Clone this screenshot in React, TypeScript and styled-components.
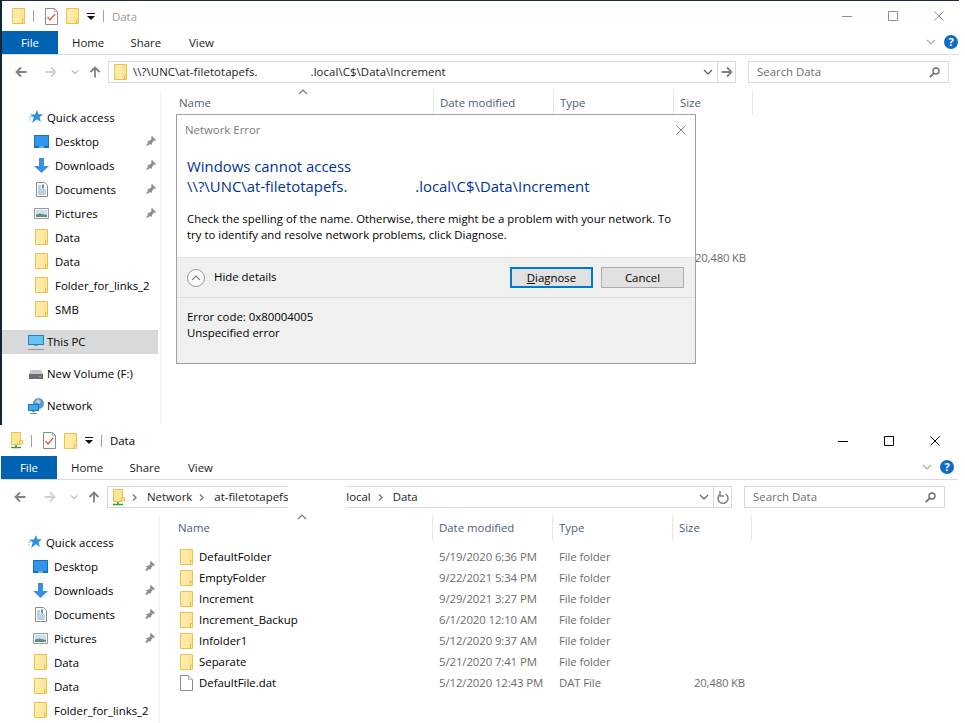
import React from 'react';
import styled, { createGlobalStyle } from 'styled-components';

const UI_FONT = `"Open Sans", "Noto Sans", "Liberation Sans", sans-serif`;

const GlobalStyle = createGlobalStyle`
  html, body {
    margin: 0;
    background: #fff;
    overflow: hidden;
  }
  body {
    font-family: ${UI_FONT};
    font-size: 11.4px;
    color: #000;
  }
`;

const Frame = styled.div`
  width: 959px;
  height: 723px;
  overflow: hidden;
`;

const Window = styled.section<{ $width: number; $height: number; $active?: boolean }>`
  position: relative;
  box-sizing: border-box;
  width: ${p => p.$width}px;
  height: ${p => p.$height}px;
  margin-left: ${p => (p.$active ? 1 : 0)}px;
  background: #fff;
  overflow: hidden;
  border-top: ${p => (p.$active ? 'none' : '1px solid #1d2d3e')};
  border-left: ${p => (p.$active ? 'none' : '2px solid #10243a')};
`;

const TitleBar = styled.header<{ $active?: boolean }>`
  display: flex;
  align-items: center;
  height: ${p => (p.$active ? 31 : 30)}px;
  padding-left: 10px;
  gap: 8px;
`;

const TitleSep = styled.i`
  width: 1px;
  height: 12px;
  margin-right: 3px;
  background: #a0a0a0;
`;

const TitleText = styled.span<{ $active?: boolean }>`
  margin-left: -3px;
  color: ${p => (p.$active ? '#000' : '#999')};
`;

const Controls = styled.div`
  display: flex;
  margin-left: auto;
  height: 100%;
`;

const ControlButton = styled.div`
  display: flex;
  align-items: center;
  justify-content: center;
  width: 46px;
  height: 100%;
`;

const TabRow = styled.nav`
  display: flex;
  align-items: center;
  height: 23px;
  border-bottom: 1px solid #dadada;
`;

const FileTab = styled.div`
  display: flex;
  align-items: center;
  justify-content: center;
  width: 56px;
  height: 100%;
  margin-right: 14px;
  background: #0063b1;
  color: #fff;
`;

const Tab = styled.div`
  width: 58.5px;
  color: #1a1a1a;
`;

const RibbonEnd = styled.div`
  display: flex;
  align-items: center;
  gap: 8px;
  margin: -2px 0 0 auto;
  padding-right: 4px;
`;

const HelpBadge = styled.div`
  display: flex;
  align-items: center;
  justify-content: center;
  width: 14px;
  height: 14px;
  border-radius: 50%;
  background: #0f6cc4;
  color: #fff;
  font-size: 11px;
  font-weight: 700;
`;

const AddressRow = styled.div`
  display: flex;
  align-items: center;
  height: 22px;
  margin: 6px 0 7px;
  padding-right: 13px;
`;

const NavGroup = styled.div`
  display: flex;
  align-items: center;
  flex: none;
  width: 106px;
  box-sizing: border-box;
  padding-left: 13px;
`;

const NavSlot = styled.span<{ $after: number }>`
  display: flex;
  margin-right: ${p => p.$after}px;
`;

const AddressBox = styled.div`
  display: flex;
  align-items: center;
  flex: 1;
  min-width: 0;
  height: 100%;
  box-sizing: border-box;
  border: 1px solid #d9d9d9;
  padding-left: 5px;
`;

const PathText = styled.span`
  margin: -2px 0 0 6px;
  color: #1a1a1a;
  letter-spacing: 0.08px;
  white-space: pre;
`;

const Gap = styled.span<{ $w: number }>`
  display: inline-block;
  width: ${p => p.$w}px;
`;

const Crumb = styled.span`
  margin-top: -2px;
  color: #1a1a1a;
  white-space: nowrap;
`;

const CrumbArrow = styled.span`
  display: flex;
  margin: 0 10px 0 7px;
`;

const RedactedGap = styled.span`
  flex: none;
  width: 58px;
  height: 24px;
  background: #fff;
`;

const AddressEnd = styled.div`
  display: flex;
  align-items: center;
  margin-left: auto;
  height: 100%;
`;

const GoButton = styled.div`
  display: flex;
  align-items: center;
  justify-content: center;
  width: 17px;
  height: 100%;
  margin-left: 4px;
  border-left: 1px solid #d9d9d9;
`;

const SearchBox = styled.div`
  display: flex;
  align-items: center;
  justify-content: space-between;
  flex: none;
  width: 201px;
  height: 100%;
  box-sizing: border-box;
  margin-left: 12px;
  padding: 0 8px;
  border: 1px solid #d9d9d9;
  color: #6d6d6d;
`;

const SearchHint = styled.span`
  margin-top: -2px;
`;

const Body = styled.div`
  display: flex;
`;

const NavPane = styled.aside`
  flex: none;
  width: 159px;
  height: 335px;
  box-sizing: border-box;
  padding-top: 15px;
  border-right: 1px solid #f0f0f0;
`;

const NavRow = styled.div<{ $level?: number; $selected?: boolean; $before?: number }>`
  display: flex;
  align-items: center;
  width: 156px;
  height: 24px;
  box-sizing: border-box;
  margin-top: ${p => p.$before ?? 0}px;
  padding-left: ${p => (p.$level ? 32 : 27)}px;
  background: ${p => (p.$selected ? '#d9d9d9' : 'transparent')};
`;

const NavIcon = styled.span<{ $level?: number }>`
  display: flex;
  align-items: center;
  justify-content: center;
  flex: none;
  width: ${p => (p.$level ? 15 : 13)}px;
  margin-right: ${p => (p.$level ? 6 : 5)}px;
`;

const NavLabel = styled.span<{ $raised?: boolean }>`
  flex: 1;
  margin-top: ${p => (p.$raised ? -2 : 0)}px;
  white-space: nowrap;
`;

const PinSlot = styled.span`
  display: flex;
  margin-right: 2px;
`;

const FileArea = styled.div`
  position: relative;
  flex: 1;
  padding-left: 11px;
`;

const SortMark = styled.span`
  position: absolute;
  left: 137px;
  top: -1px;
  display: flex;
`;

const ColumnHeader = styled.div`
  display: grid;
  grid-template-columns: 261px 120px 120px 80px;
  height: 25px;
  width: 582px;
`;

const HeadCell = styled.div<{ $last?: boolean }>`
  display: flex;
  align-items: center;
  box-sizing: border-box;
  padding-left: 6px;
  color: #4c607a;
  border-left: 1px solid #e5e5e5;
  border-right: ${p => (p.$last ? '1px solid #e5e5e5' : 'none')};
  &:first-child {
    padding-left: 7px;
    border-left: none;
  }
`;

const FileList = styled.div`
  margin-top: 6px;
`;

const FileRow = styled.div`
  display: grid;
  grid-template-columns: 261px 120px 120px 80px;
  height: 21px;
  align-items: center;
  color: #6d6d6d;
`;

const NameCell = styled.div`
  display: flex;
  align-items: center;
  gap: 6px;
  padding-left: 9px;
  color: #000;
`;

const TextCell = styled.div`
  padding-left: 7px;
  letter-spacing: -0.1px;
  white-space: nowrap;
`;

const SizeCell = styled.div`
  grid-column: 4;
  padding-right: 7px;
  text-align: right;
  letter-spacing: -0.2px;
`;

/* dialog floats over the first window */
const Dialog = styled.div`
  position: absolute;
  left: 174px;
  top: 113px;
  width: 520px;
  height: 250px;
  box-sizing: border-box;
  display: flex;
  flex-direction: column;
  background: #fff;
  border: 1px solid #a0a0a0;
`;

const DialogTitle = styled.div`
  display: flex;
  align-items: center;
  justify-content: space-between;
  height: 29px;
  padding: 0 9px 0 8px;
  color: #7a7a7a;
`;

const DialogMain = styled.div`
  flex: 1;
  padding: 12px 10px 0;
`;

const Heading = styled.div`
  font-size: 14.9px;
  line-height: 20px;
  color: #003399;
  white-space: pre;
`;

const Message = styled.p`
  margin: 15px 0 0;
  line-height: 16px;
  white-space: nowrap;
`;

const DialogFooter = styled.div`
  display: flex;
  align-items: center;
  height: 39px;
  padding: 0 11px 0 10px;
  background: #f0f0f0;
  border-top: 1px solid #dfdfdf;
`;

const ToggleCircle = styled.span`
  display: flex;
  align-items: center;
  justify-content: center;
  width: 18px;
  height: 18px;
  box-sizing: border-box;
  margin-right: 9px;
  border: 1px solid #9a9a9a;
  border-radius: 50%;
  background: #fbfbfb;
`;

const ToggleLabel = styled.span`
  flex: 1;
  margin-top: -3px;
`;

const DialogButton = styled.button<{ $primary?: boolean }>`
  width: 83px;
  height: 21px;
  box-sizing: border-box;
  margin-left: 8px;
  padding: 0;
  font: inherit;
  color: #000;
  background: #e1e1e1;
  border: ${p => (p.$primary ? '2px solid #0078d7' : '1px solid #adadad')};
  u {
    text-underline-offset: 1px;
  }
`;

const DialogDetails = styled.div`
  height: 66px;
  box-sizing: border-box;
  padding: 11px 10px 0;
  line-height: 16px;
  background: #f0f0f0;
  border-top: 1px solid #dfdfdf;
`;

const Svg = styled.svg`
  display: block;
  flex: none;
`;

const FolderIcon = () => (
  <Svg width="13" height="16" viewBox="0 0 13 16">
    <path d="M.5.5h12v15H.5z" fill="#ffe596" stroke="#e8c24f" />
    <path d="M1 1h7v14H1z" fill="#ffeaa8" />
    <path d="M10.5 15.5v-4h2" fill="none" stroke="#e8c24f" />
  </Svg>
);

const NetFolderIcon = () => (
  <Svg width="12" height="17" viewBox="0 0 12 17">
    <path d="M.5.5h9v12h-9z" fill="#ffe596" stroke="#e8c24f" />
    <path d="M8.5 12.5v-4h3v3z" fill="#ffe596" stroke="#e8c24f" />
    <path d="M5 13v2M0 15.5h10" stroke="#3f9a3a" strokeWidth="1.6" />
  </Svg>
);

const ChecklistIcon = () => (
  <Svg width="13" height="17" viewBox="0 0 13 17">
    <path d="M.5.5h9l3 3v13H.5z" fill="#fff" stroke="#8c8c8c" />
    <path d="M9.5.5v3h3" fill="none" stroke="#b5b5b5" />
    <path d="M2.5 9l2.5 3 5-6" fill="none" stroke="#e8592b" strokeWidth="1.3" />
  </Svg>
);

const DropMark = () => (
  <Svg width="8" height="7" viewBox="0 0 8 7">
    <path d="M0 0h8v1H0zM0 3h8L4 7z" fill="#111" />
  </Svg>
);

const MinIcon = ({ color }: { color: string }) => (
  <Svg width="10" height="10" viewBox="0 0 10 10">
    <path d="M0 5.5h10" stroke={color} />
  </Svg>
);

const MaxIcon = ({ color }: { color: string }) => (
  <Svg width="10" height="10" viewBox="0 0 10 10">
    <path d="M.5.5h9v9h-9z" fill="none" stroke={color} />
  </Svg>
);

const CloseIcon = ({ color }: { color: string }) => (
  <Svg width="10" height="10" viewBox="0 0 10 10">
    <path d="M.5.5l9 9M9.5.5l-9 9" stroke={color} />
  </Svg>
);

const Chevron = ({ up, color = '#8a8a8a', w = 10 }: { up?: boolean; color?: string; w?: number }) => (
  <Svg width={w} height="6" viewBox="0 0 10 6">
    <path d={up ? 'M1 5l4-4 4 4' : 'M1 1l4 4 4-4'} fill="none" stroke={color} strokeWidth="1.1" />
  </Svg>
);

const CrumbChevron = () => (
  <Svg width="5" height="7" viewBox="0 0 5 7">
    <path d="M1 .5l3 3-3 3" fill="none" stroke="#808080" strokeWidth="1.5" />
  </Svg>
);

const ArrowIcon = ({ dir, color }: { dir: 'left' | 'right' | 'up'; color: string }) => {
  const angle = dir === 'left' ? 0 : dir === 'right' ? 180 : 90;
  return (
    <Svg width="12" height="12" viewBox="0 0 12 12">
      <path
        d="M11.5 6H1.5M6 1.5L1.5 6 6 10.5"
        fill="none"
        stroke={color}
        strokeWidth="1.8"
        transform={`rotate(${angle} 6 6)`}
      />
    </Svg>
  );
};

const RefreshIcon = () => (
  <Svg width="12" height="13" viewBox="0 0 12 13">
    <path d="M8.7 3.2A5 5 0 1 1 3 3.4" fill="none" stroke="#808080" strokeWidth="1.5" />
    <path d="M3 0v5h4" fill="none" stroke="#808080" strokeWidth="1.4" />
  </Svg>
);

const SearchIcon = () => (
  <Svg width="11" height="11" viewBox="0 0 11 11">
    <circle cx="7" cy="4" r="3" fill="none" stroke="#6d6d6d" strokeWidth="1.4" />
    <path d="M4.8 6.2L.8 10.2" stroke="#6d6d6d" strokeWidth="1.7" />
  </Svg>
);

const StarIcon = () => (
  <Svg width="14" height="14" viewBox="0 0 14 14">
    <path d="M8 0l1.6 4.3H14l-3.5 2.9L12 12 8 9.3 3 13l1.8-5.5L1 4.5h5z" fill="#2f8fe0" />
    <path d="M0 7h3M0 10h2" stroke="#8cc4f0" />
  </Svg>
);

const PinIcon = () => (
  <Svg width="10" height="10" viewBox="0 0 10 10">
    <path d="M6 0l4 4-1 1-1-.5L6 7v2L4.5 8 1 10l-1 0 2-3.5L1 5h2l2.5-2L5 1z" fill="#8f8f8f" />
  </Svg>
);

const DesktopIcon = () => (
  <Svg width="15" height="13" viewBox="0 0 15 13">
    <path d="M0 0h15v13H0z" fill="#1b6fb5" />
    <path d="M1 1h13v10H1z" fill="#2f96ec" />
    <path d="M5 12h5" stroke="#d7e6f3" />
  </Svg>
);

const DownloadIcon = () => (
  <Svg width="15" height="15" viewBox="0 0 15 15">
    <path d="M5 0h5v8h5l-7.5 7L0 8h5z" fill="#3a8fe0" />
  </Svg>
);

const DocumentsIcon = () => (
  <Svg width="12" height="15" viewBox="0 0 12 15">
    <path d="M.5.5h8l3 3v11H.5z" fill="#fff" stroke="#8a8a8a" />
    <path d="M2 4h3M2 6h3M2 8h8M2 10h8M2 12h8" stroke="#7ba6c2" />
    <path d="M6 2.5h2v4H6z" fill="#4a9ad0" />
  </Svg>
);

const PicturesIcon = () => (
  <Svg width="15" height="11" viewBox="0 0 15 11">
    <path d="M.5.5h14v10H.5z" fill="#f0f4f8" stroke="#9a9a9a" />
    <path d="M2 2h11v5H2z" fill="#c8dff2" />
    <path d="M2 6.5l4-1 7 1.5V9H2z" fill="#5f8f80" />
  </Svg>
);

const PcIcon = () => (
  <Svg width="16" height="15" viewBox="0 0 16 15">
    <path d="M0 0h16v10H0z" fill="#1e82c8" />
    <path d="M1 1h14v8H1z" fill="#66c4f5" />
    <path d="M6 10.5h4M0 14.5h16" stroke="#8d9aa5" />
  </Svg>
);

const DriveIcon = () => (
  <Svg width="14" height="9" viewBox="0 0 14 9">
    <path d="M2 0h10l2 4H0z" fill="#c4c4c4" />
    <path d="M0 4h14v5H0z" fill="#6e6e6e" />
    <path d="M10 6h2v1h-2z" fill="#5fd35f" />
  </Svg>
);

const NetworkIcon = () => (
  <Svg width="16" height="16" viewBox="0 0 16 16">
    <circle cx="10.5" cy="5.5" r="5.5" fill="#5f98c8" />
    <path d="M7 4l3-3 3 2-2 3z" fill="#a8cfe8" />
    <path d="M0 6h11v7H0z" fill="#1e78c8" />
    <path d="M1 7h9v5H1z" fill="#3fa9f0" />
    <path d="M4 13.5h3M2 15.5h7" stroke="#7a8a98" />
  </Svg>
);

const FileIcon = () => (
  <Svg width="13" height="16" viewBox="0 0 13 16">
    <path d="M.5.5h8l4 4v11H.5z" fill="#fff" stroke="#8c8c8c" />
    <path d="M8.5.5v4h4" fill="#eee" stroke="#b5b5b5" />
  </Svg>
);

const quickItems = [
  { label: 'Desktop', icon: <DesktopIcon />, pinned: true },
  { label: 'Downloads', icon: <DownloadIcon />, pinned: true },
  { label: 'Documents', icon: <DocumentsIcon />, pinned: true },
  { label: 'Pictures', icon: <PicturesIcon />, pinned: true },
  { label: 'Data', icon: <FolderIcon /> },
  { label: 'Data', icon: <FolderIcon /> },
  { label: 'Folder_for_links_2', icon: <FolderIcon /> },
  { label: 'SMB', icon: <FolderIcon /> },
];

const files = [
  { name: 'DefaultFolder', date: '5/19/2020 6:36 PM', type: 'File folder' },
  { name: 'EmptyFolder', date: '9/22/2021 5:34 PM', type: 'File folder' },
  { name: 'Increment', date: '9/29/2021 3:27 PM', type: 'File folder' },
  { name: 'Increment_Backup', date: '6/1/2020 12:10 AM', type: 'File folder' },
  { name: 'Infolder1', date: '5/12/2020 9:37 AM', type: 'File folder' },
  { name: 'Separate', date: '5/21/2020 7:41 PM', type: 'File folder' },
  { name: 'DefaultFile.dat', date: '5/12/2020 12:43 PM', type: 'DAT File', size: '20,480 KB', isFile: true },
];

const Explorer = ({
  active,
  width,
  height,
  address,
  go,
  children,
}: {
  active?: boolean;
  width: number;
  height: number;
  address: React.ReactNode;
  go: React.ReactNode;
  children?: React.ReactNode;
}) => {
  const ctl = active ? '#000' : '#8f8f8f';
  // the lower window runs off the page, the upper one has the dialog over its rows
  const navItems = active ? quickItems.slice(0, 7) : quickItems;
  return (
    <Window $width={width} $height={height} $active={active}>
      <TitleBar $active={active}>
        {active ? <NetFolderIcon /> : <FolderIcon />}
        <TitleSep />
        <ChecklistIcon />
        <FolderIcon />
        <DropMark />
        <TitleSep />
        <TitleText $active={active}>Data</TitleText>
        <Controls>
          <ControlButton><MinIcon color={ctl} /></ControlButton>
          <ControlButton><MaxIcon color={ctl} /></ControlButton>
          <ControlButton><CloseIcon color={ctl} /></ControlButton>
        </Controls>
      </TitleBar>
      <TabRow>
        <FileTab>File</FileTab>
        <Tab>Home</Tab>
        <Tab>Share</Tab>
        <Tab>View</Tab>
        <RibbonEnd>
          <Chevron color="#a8a8a8" />
          <HelpBadge>?</HelpBadge>
        </RibbonEnd>
      </TabRow>
      <AddressRow>
        <NavGroup>
          <NavSlot $after={18}><ArrowIcon dir="left" color="#808080" /></NavSlot>
          <NavSlot $after={14}><ArrowIcon dir="right" color="#d0d0d0" /></NavSlot>
          <NavSlot $after={10}><Chevron w={8} color="#808080" /></NavSlot>
          <NavSlot $after={0}><ArrowIcon dir="up" color="#808080" /></NavSlot>
        </NavGroup>
        <AddressBox>
          {address}
          <AddressEnd>
            <Chevron color="#555" />
            <GoButton>{go}</GoButton>
          </AddressEnd>
        </AddressBox>
        <SearchBox>
          <SearchHint>Search Data</SearchHint>
          <SearchIcon />
        </SearchBox>
      </AddressRow>
      <Body>
        <NavPane>
          <NavRow>
            <NavIcon><StarIcon /></NavIcon>
            <NavLabel>Quick access</NavLabel>
          </NavRow>
          {navItems.map((item, i) => (
            <NavRow $level={1} key={i}>
              <NavIcon $level={1}>{item.icon}</NavIcon>
              <NavLabel>{item.label}</NavLabel>
              {item.pinned && <PinSlot><PinIcon /></PinSlot>}
            </NavRow>
          ))}
          {!active && (
            <>
              <NavRow $selected $before={9}>
                <NavIcon><PcIcon /></NavIcon>
                <NavLabel $raised>This PC</NavLabel>
              </NavRow>
              <NavRow $before={8}>
                <NavIcon><DriveIcon /></NavIcon>
                <NavLabel $raised>New Volume (F:)</NavLabel>
              </NavRow>
              <NavRow $before={8}>
                <NavIcon><NetworkIcon /></NavIcon>
                <NavLabel $raised>Network</NavLabel>
              </NavRow>
            </>
          )}
        </NavPane>
        <FileArea>
          <SortMark><Chevron up color="#777" /></SortMark>
          <ColumnHeader>
            <HeadCell>Name</HeadCell>
            <HeadCell>Date modified</HeadCell>
            <HeadCell>Type</HeadCell>
            <HeadCell $last>Size</HeadCell>
          </ColumnHeader>
          <FileList>
            {files.map(f => (
              <FileRow key={f.name}>
                {active && (
                  <>
                    <NameCell>
                      {f.isFile ? <FileIcon /> : <FolderIcon />}
                      {f.name}
                    </NameCell>
                    <TextCell>{f.date}</TextCell>
                    <TextCell>{f.type}</TextCell>
                  </>
                )}
                <SizeCell>{f.size}</SizeCell>
              </FileRow>
            ))}
          </FileList>
        </FileArea>
      </Body>
      {children}
    </Window>
  );
};

export default function App() {
  return (
    <Frame>
      <GlobalStyle />
      <Explorer
        width={962}
        height={425}
        address={
          <>
            <FolderIcon />
            <PathText>\\?\UNC\at-filetotapefs.<Gap $w={53} />.local\C$\Data\Increment</PathText>
          </>
        }
        go={<ArrowIcon dir="right" color="#808080" />}
      >
        <Dialog>
          <DialogTitle>
            Network Error
            <CloseIcon color="#8a8a8a" />
          </DialogTitle>
          <DialogMain>
            <Heading>Windows cannot access</Heading>
            <Heading>\\?\UNC\at-filetotapefs.<Gap $w={68} />.local\C$\Data\Increment</Heading>
            <Message>
              Check the spelling of the name. Otherwise, there might be a problem with your network. To
              <br />
              try to identify and resolve network problems, click Diagnose.
            </Message>
          </DialogMain>
          <DialogFooter>
            <ToggleCircle><Chevron up color="#7a7a7a" /></ToggleCircle>
            <ToggleLabel>Hide details</ToggleLabel>
            <DialogButton $primary><u>D</u>iagnose</DialogButton>
            <DialogButton>Cancel</DialogButton>
          </DialogFooter>
          <DialogDetails>
            Error code: 0x80004005
            <br />
            Unspecified error
          </DialogDetails>
        </Dialog>
      </Explorer>
      <Explorer
        active
        width={957}
        height={298}
        address={
          <>
            <NetFolderIcon />
            <CrumbArrow><CrumbChevron /></CrumbArrow>
            <Crumb>Network</Crumb>
            <CrumbArrow><CrumbChevron /></CrumbArrow>
            <Crumb>at-filetotapefs</Crumb>
            <RedactedGap />
            <Crumb>local</Crumb>
            <CrumbArrow><CrumbChevron /></CrumbArrow>
            <Crumb>Data</Crumb>
          </>
        }
        go={<RefreshIcon />}
      />
    </Frame>
  );
}
